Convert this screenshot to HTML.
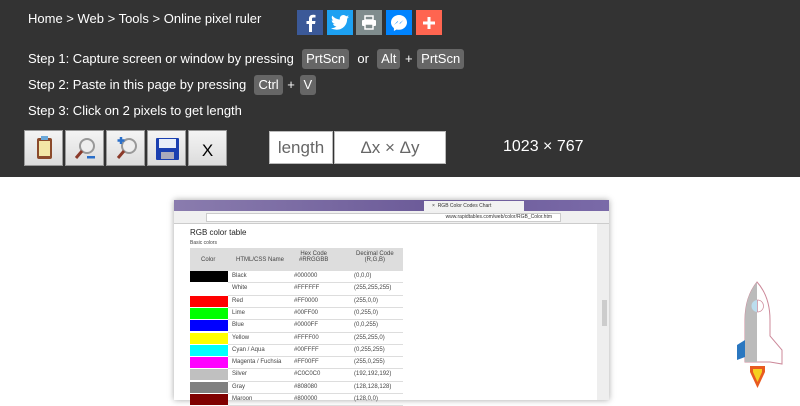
<!DOCTYPE html>
<html><head><meta charset="utf-8"><style>
*{margin:0;padding:0;box-sizing:border-box}
body{width:800px;height:400px;overflow:hidden;background:#fff;font-family:"Liberation Sans",Arial,sans-serif;position:relative}
.hdr{position:absolute;left:0;top:0;width:800px;height:177px;background:#333;color:#fff}
.a{position:absolute;font-size:13px;color:#fff;white-space:nowrap}
.k{display:inline-block;background:#666;border-radius:3px;padding:2px 4px;line-height:16px;margin:0 1px}
.so{position:absolute;top:10px;width:26px;height:25px;display:flex;align-items:center;justify-content:center}
.btn{position:absolute;top:130px;width:39px;height:36px;background:linear-gradient(#f4f4f4,#dcdcdc);border:1px solid #999}
.box{position:absolute;top:131px;height:33px;background:#fff;border:1px solid #bbb;color:#666;font-size:17px;text-align:center;line-height:31px}
.win{position:absolute;left:174px;top:200px;width:435px;height:200px;background:#fff;box-shadow:0 0 6px rgba(0,0,0,.35)}
.t{position:absolute;font-size:6px;color:#444;white-space:nowrap}
</style></head><body>
<div class="hdr">
<div class="a" style="left:28px;top:11px">Home &gt; Web &gt; Tools &gt; Online pixel ruler</div>
<div class="so" style="left:297px;background:#3b5998"><svg width="14" height="18" viewBox="0 0 14 18"><path d="M9 18V10h3l.5-3H9V5c0-1 .3-1.5 1.6-1.5H12.5V1C12 .9 11 .8 10 .8 7.6.8 6 2.2 6 4.8V7H3.5v3H6v8z" fill="#fff"/></svg></div>
<div class="so" style="left:327px;background:#1da1f2"><svg width="18" height="15" viewBox="0 0 24 20"><path d="M24 2.4c-.9.4-1.8.7-2.8.8 1-.6 1.8-1.6 2.2-2.7-1 .6-2 1-3.1 1.2C19.3.7 18 0 16.6 0c-2.7 0-4.9 2.2-4.9 4.9 0 .4 0 .8.1 1.1C7.7 5.8 4.100 3.9 1.7.9c-.4.7-.7 1.6-.7 2.5 0 1.7.9 3.2 2.200 4.1-.8 0-1.6-.2-2.2-.6v.1c0 2.4 1.7 4.4 3.9 4.8-.7.2-1.5.2-2.2.1.6 2 2.4 3.4 4.6 3.4-1.7 1.3-3.8 2.1-6.1 2.1H0c2.2 1.4 4.8 2.2 7.5 2.2 9.1 0 14-7.5 14-14v-.6c1-.7 1.8-1.6 2.5-2.6z" fill="#fff"/></svg></div>
<div class="so" style="left:356px;background:#7f8c8d"><svg width="16" height="15" viewBox="0 0 16 15"><rect x="4" y="1" width="8" height="4" fill="none" stroke="#fff" stroke-width="1.5"/><rect x="1" y="5" width="14" height="6" rx="1" fill="#fff"/><rect x="4" y="9" width="8" height="5" fill="#7f8c8d" stroke="#fff" stroke-width="1.5"/></svg></div>
<div class="so" style="left:386px;background:#0084ff"><svg width="18" height="18" viewBox="0 0 18 18"><path d="M9 1C4.6 1 1 4.3 1 8.4c0 2.3 1.1 4.4 2.9 5.7V17l2.7-1.5c.8.2 1.6.3 2.4.3 4.4 0 8-3.3 8-7.4S13.4 1 9 1z" fill="#fff"/><path d="M4 11l3.5-3.8 2 2L13.5 6 10 9.8l-2-2z" fill="#0084ff"/></svg></div>
<div class="so" style="left:416px;background:#ff6550"><svg width="14" height="14"><path d="M7 1v12M1 7h12" stroke="#fff" stroke-width="3"/></svg></div>
<div class="a" style="left:28px;top:49px">Step 1: Capture screen or window by pressing &nbsp;<span class="k">PrtScn</span>&nbsp; or &nbsp;<span class="k">Alt</span> + <span class="k">PrtScn</span></div>
<div class="a" style="left:28px;top:75px">Step 2: Paste in this page by pressing &nbsp;<span class="k">Ctrl</span> + <span class="k">V</span></div>
<div class="a" style="left:28px;top:103px">Step 3: Click on 2 pixels to get length</div>
<div class="btn" style="left:24px"><svg width="39" height="36"><rect x="12" y="7" width="15" height="21" rx="2" fill="#8b4a2b"/><rect x="14" y="10" width="11" height="15" fill="#f3e7a6"/><rect x="16" y="5" width="7" height="4" fill="#6aa7d8"/></svg></div>
<div class="btn" style="left:65px"><svg width="39" height="36"><circle cx="21" cy="15" r="7" fill="#eee" stroke="#999" stroke-width="2"/><path d="M16 20l-6 7" stroke="#8b3a2a" stroke-width="3"/><rect x="21" y="25" width="8" height="2.5" fill="#2a6fc9"/></svg></div>
<div class="btn" style="left:106px"><svg width="39" height="36"><circle cx="22" cy="15" r="7" fill="#eee" stroke="#999" stroke-width="2"/><path d="M17 20l-6 7" stroke="#8b3a2a" stroke-width="3"/><path d="M14 6v7M10.5 9.5h7" stroke="#2a6fc9" stroke-width="2.5"/></svg></div>
<div class="btn" style="left:147px"><svg width="39" height="36"><rect x="8" y="7" width="23" height="22" rx="1" fill="#1a3fb0"/><rect x="11" y="8" width="17" height="9" fill="#e8eef8"/><rect x="13" y="21" width="13" height="7" fill="#aab"/></svg></div>
<div class="btn" style="left:188px;font-size:17px;text-align:center;line-height:40px;color:#000">X</div>
<div class="box" style="left:269px;width:64px">length</div>
<div class="box" style="left:334px;width:112px">Δx × Δy</div>
<div class="a" style="left:503px;top:138px;font-size:16px">1023 × 767</div>
</div>
<div class="win">
<div style="position:absolute;left:0;top:0;width:435px;height:11px;background:linear-gradient(90deg,#8a7cae,#6b5a98 60%,#7a6aa8)"></div>
<div style="position:absolute;left:250px;top:1px;width:100px;height:10px;background:#f2f2f2;font-size:5px;line-height:10px;padding-left:8px;color:#333">× &nbsp;RGB Color Codes Chart</div>
<div style="position:absolute;left:0;top:11px;width:435px;height:13px;background:#f0f0f0;border-bottom:1px solid #ccc"></div>
<div style="position:absolute;left:32px;top:13px;width:355px;height:9px;background:#fff;border:1px solid #ccc;font-size:5px;text-align:right;padding-right:8px;color:#333">www.rapidtables.com/web/color/RGB_Color.htm</div>
<div style="position:absolute;left:423px;top:24px;width:12px;height:176px;background:#eee"></div>
<div style="position:absolute;left:428px;top:100px;width:5px;height:26px;background:#ccc"></div>
<div class="t" style="left:16px;top:28px;font-size:8px;color:#222">RGB color table</div>
<div class="t" style="left:16px;top:40px;font-size:5px">Basic colors</div>
<div style="position:absolute;left:16px;top:48px;width:213px;height:23px;background:#ddd"></div>
<div class="t" style="left:27px;top:57px">Color</div><div class="t" style="left:62px;top:57px">HTML/CSS Name</div>
<div class="t" style="left:125px;top:51px;text-align:center">Hex Code<br>#RRGGBB</div><div class="t" style="left:182px;top:51px;text-align:center">Decimal Code<br>(R,G,B)</div>
<div id="rows"></div>
</div>
<svg style="position:absolute;left:733px;top:280px" width="50" height="110" viewBox="0 0 50 110">
<path d="M24 2C16 12 12 24 12 40v42h25l12 2V70L37 56V40C37 24 33 12 24 2z" fill="#fff" stroke="#c89" stroke-width="1"/>
<path d="M24 2C16 12 12 24 12 40v42h12z" fill="#bbb"/>
<circle cx="24.5" cy="26" r="6" fill="#bde"/><path d="M24.5 20a6 6 0 010 12z" fill="#fff" stroke="#c89" stroke-width=".7"/>
<path d="M12 60l-8 5v15l8-3z" fill="#2a77c0"/>
<path d="M17 86h15v6l-7.5 16-7.5-16z" fill="#e85a20"/><path d="M20 89h9v3l-4.5 10-4.5-10z" fill="#f5d020"/>
</svg>
<script>
var r=[["#000","Black","#000000","(0,0,0)"],["#fff","White","#FFFFFF","(255,255,255)"],["#f00","Red","#FF0000","(255,0,0)"],["#0f0","Lime","#00FF00","(0,255,0)"],["#00f","Blue","#0000FF","(0,0,255)"],["#ff0","Yellow","#FFFF00","(255,255,0)"],["#0ff","Cyan / Aqua","#00FFFF","(0,255,255)"],["#f0f","Magenta / Fuchsia","#FF00FF","(255,0,255)"],["#c0c0c0","Silver","#C0C0C0","(192,192,192)"],["#808080","Gray","#808080","(128,128,128)"],["#800000","Maroon","#800000","(128,0,0)"]];
var h="";r.forEach(function(x,i){var y=71+i*12.3;h+='<div style="position:absolute;left:16px;top:'+y+'px;width:38px;height:11px;background:'+x[0]+'"></div><div style="position:absolute;left:54px;top:'+(y+11.3)+'px;width:175px;height:1px;background:#ddd"></div><div class="t" style="left:58px;top:'+(y+2)+'px">'+x[1]+'</div><div class="t" style="left:120px;top:'+(y+2)+'px">'+x[2]+'</div><div class="t" style="left:180px;top:'+(y+2)+'px">'+x[3]+'</div>';});
document.getElementById("rows").outerHTML=h;
</script>
</body></html>
